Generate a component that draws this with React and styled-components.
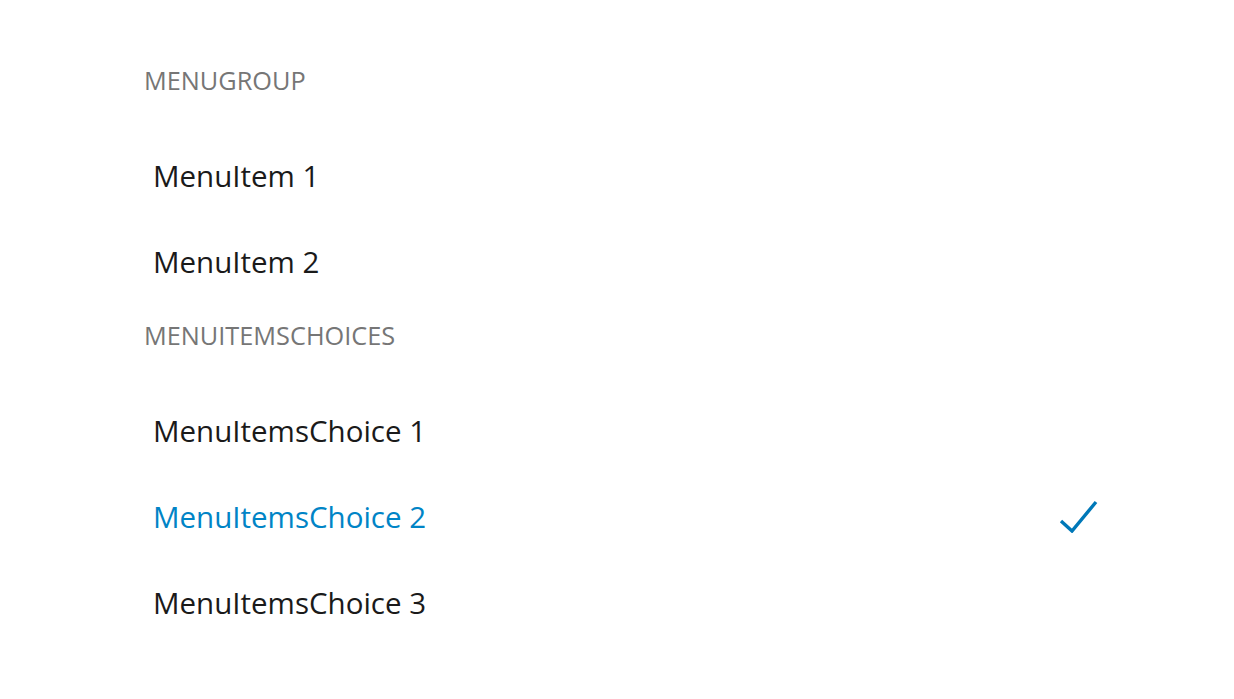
import styled, { createGlobalStyle } from 'styled-components';

const GlobalStyle = createGlobalStyle`
	body {
		margin: 0;
		background: #ffffff;
		font-family: "Open Sans", "Noto Sans", sans-serif;
	}
`;

const groups = [
	{
		title: 'MENUGROUP',
		items: [{ label: 'MenuItem 1' }, { label: 'MenuItem 2' }],
	},
	{
		title: 'MENUITEMSCHOICES',
		items: [
			{ label: 'MenuItemsChoice 1' },
			{ label: 'MenuItemsChoice 2', selected: true },
			{ label: 'MenuItemsChoice 3' },
		],
	},
];

function Check() {
	return (
		<CheckIcon viewBox="0 0 40 34" width="40" height="34">
			<path d="M3 22 L14 32 L38 3" />
		</CheckIcon>
	);
}

export default function App() {
	return (
		<>
			<GlobalStyle />
			<Menu>
				{groups.map(group => (
					<Group key={group.title}>
						<GroupHeader>{group.title}</GroupHeader>
						{group.items.map(item => (
							<Item key={item.label} selected={item.selected}>
								<Label>{item.label}</Label>
								{item.selected && <Check />}
							</Item>
						))}
					</Group>
				))}
			</Menu>
		</>
	);
}

// ########   STYLING    ###########

const Menu = styled.div`
	display: flex;
	flex-direction: column;
	padding: 49px 0 0 145px;
	width: 965px;
`;

const Group = styled.div`
	display: flex;
	flex-direction: column;
`;

const GroupHeader = styled.div`
	display: flex;
	align-items: center;
	height: 62px;
	margin-bottom: 21px;
	margin-left: -1px;
	font-size: 25.3px;
	color: #767676;
`;

const Item = styled.div`
	display: flex;
	align-items: center;
	justify-content: space-between;
	height: 86px;
	padding: 0 12px 0 8px;
	color: ${props => (props.selected ? '#0084c6' : '#1a1a1a')};
`;

const Label = styled.span`
	font-size: 29.5px;
`;

const CheckIcon = styled.svg`
	fill: none;
	stroke: #0078b8;
	stroke-width: 3.4;
	stroke-linejoin: miter;
`;
